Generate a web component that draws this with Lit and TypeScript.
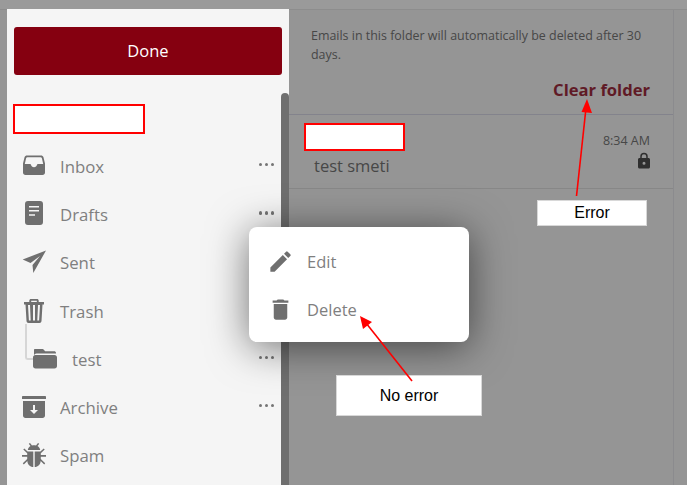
import { LitElement, html, css, svg } from "lit";
import { customElement } from "lit/decorators.js";

const icons: Record<string, any> = {
  inbox: svg`<path fill-rule="evenodd" d="M5 1.500h14c1.200 0 2 .6 2.400 1.600L23 9.500v9c0 1.600-1 2.500-2.500 2.500h-17C2 21 1 20.100 1 18.500v-9l1.600-6.400C3 2.100 3.800 1.500 5 1.500zM5.400 3.300c-.7 0-1.100.3-1.300.9L2.800 10H8c.6 0 .9.300 1 .8.300 1.500 1.400 2.400 3 2.400s2.700-.9 3-2.400c.1-.5.4-.8 1-.8h5.200l-1.300-5.800c-.2-.6-.6-.9-1.300-.9z"/>`,
  drafts: svg`<path fill-rule="evenodd" d="M6 -1h12c2 0 3 1 3 3v18c0 2-1 3-3 3H6c-2 0-3-1-3-3V2c0-2 1-3 3-3zm1 5v1.500h10V4zm0 4v1.500h10V8zm0 4.300v1.500h6v-1.500z"/>`,
  sent: svg`<path d="M24 .5 .7 9.500 8.500 13 18 6l-7.500 9 .8 8z"/>`,
  trash: svg`<path fill-rule="evenodd" d="M9 0h6c1 0 1.600.6 1.700 1.600V3H22v2.500h-1.500L19.500 22c-.1 1.300-.9 2-2 2H6.500c-1.100 0-1.900-.7-2-2L3.500 5.500H2V3h5.300V1.600C7.400.6 8 0 9 0zm.2 1.800V3h5.600V1.800zM6 6l.9 15.600h1.800L8 6zm5 0v15.600h2V6zm5 0-.7 15.600h1.800L18 6z"/>`,
  folder: svg`<path d="M2 3h7c1 0 1.500.4 2 1l1.200 1.300H21c1.200 0 2 .6 2 1.700v.5H3.500C2 7.500 1 8.500 1 10V4c0-.6.400-1 1-1zM3.500 9h18C23 9 24 10 24 11.500V20c0 1.500-1 2.500-2.500 2.500h-19C1 22.500 0 21.500 0 20v-8.500C0 10 1 9 2.500 9z" transform="translate(0 -1)"/>`,
  archive: svg`<path fill-rule="evenodd" d="M1 1h22c.6 0 1 .4 1 1v2H0V2c0-.6.400-1 1-1zM1 6h22v14.500c0 1.500-1 2.500-2.500 2.500h-17C2 23 1 22 1 20.500zm10 4v5H8l4 4 4-4h-3v-5z"/>`,
  bug: svg`<path d="M8.500 3 6.800.8 8 0l2 2.500c1.300-.5 2.700-.5 4 0L16 0l1.200.8L15.500 3c1.500.9 2.500 2.300 2.700 4H5.800c.2-1.700 1.200-3.100 2.700-4zM5.600 8.500h5.700V24C8 24 5.600 21.500 5.300 18L1.800 21.500.8 20.300l4.400-4.400v-2.200H0v-1.600h5.200V10.300L1.300 6.500l1-1.100zm7.100 0h5.700l3.300-3.100 1 1.100-3.900 3.800v1.800H24v1.600h-5.200v2.200l4.400 4.400-1 1.200L18.700 18c-.3 3.500-2.700 6-6 6z"/>`,
  pencil: svg`<path d="M3 17.250V21h3.750L17.810 9.940l-3.750-3.750zM20.710 7.040a1 1 0 0 0 0-1.410l-2.340-2.340a1 1 0 0 0-1.410 0l-1.830 1.830 3.750 3.750z"/>`,
  del: svg`<path d="M6 19c0 1.100.9 2 2 2h8c1.100 0 2-.9 2-2V7H6zM19 4h-3.500l-1-1h-5l-1 1H5v2h14z"/>`,
  lock: svg`<path fill-rule="evenodd" d="M12 1a5 5 0 0 1 5 5v2h1c1.100 0 2 .9 2 2v10c0 1.100-.9 2-2 2H6c-1.100 0-2-.9-2-2V10c0-1.100.9-2 2-2h1V6a5 5 0 0 1 5-5zm0 2a3 3 0 0 0-3 3v2h6V6a3 3 0 0 0-3-3zm0 10a2 2 0 1 0 0 4 2 2 0 0 0 0-4z"/>`,
};

const folders = [
  { name: "Inbox", icon: "inbox", more: true },
  { name: "Drafts", icon: "drafts", more: true },
  { name: "Sent", icon: "sent", more: false },
  { name: "Trash", icon: "trash", more: false },
  { name: "test", icon: "folder", more: true, child: true },
  { name: "Archive", icon: "archive", more: true },
  { name: "Spam", icon: "bug", more: false },
];

@customElement("app-root")
export class AppRoot extends LitElement {
  static styles = css`
    :host {
      display: block;
      position: relative;
      width: 687px;
      height: 485px;
      overflow: hidden;
      background: #959595;
      font-family: "Open Sans", sans-serif;
      color: #7f7f7f;
    }
    .top {
      height: 9px;
      background: #9a9a9a;
      border-bottom: 1px solid #8d8d8d;
    }
    .body {
      display: flex;
      height: 475px;
    }
    .strip {
      width: 7px;
      flex: none;
    }
    .side {
      width: 282px;
      flex: none;
      margin-top: -1px;
      background: #f5f5f5;
      position: relative;
      overflow: hidden;
      box-sizing: border-box;
      padding: 18px 7px 0 7px;
    }
    .scroll {
      position: absolute;
      right: 0;
      top: 84px;
      bottom: -10px;
      width: 8px;
      background: #6f6f6f;
      border-radius: 4px 4px 0 0;
    }
    .done {
      height: 48px;
      line-height: 48px;
      text-align: center;
      background: #850010;
      color: #fff;
      border-radius: 3px;
      font-size: 16.500px;
    }
    .red {
      box-sizing: border-box;
      background: #fff;
      border: 2px solid #ff0000;
    }
    .side .red {
      width: 132px;
      height: 30px;
      margin: 29px 0 9px -1px;
    }
    .row {
      display: flex;
      align-items: center;
      height: 48.200px;
      font-size: 16.800px;
      position: relative;
      padding-right: 8px;
    }
    .row svg.ic {
      width: 24px;
      height: 24px;
      fill: #6f6f6f;
      flex: none;
      margin: -2px 14px 0 8px;
      overflow: visible;
    }
    .row.child svg.ic {
      margin: -2px 15px 0 19px;
    }
    .row .name {
      flex: 1;
      margin-top: -1px;
    }
    .more {
      display: flex;
      gap: 2.500px;
      margin-bottom: 5px;
    }
    .more i {
      width: 3.500px;
      height: 3.500px;
      border-radius: 50%;
      background: #757575;
    }
    .elbow {
      position: absolute;
      left: 11px;
      top: -12px;
      width: 8px;
      height: 36px;
      box-sizing: border-box;
      border-left: 2px solid #d6d6d6;
      border-bottom: 2px solid #d6d6d6;
      border-bottom-left-radius: 3px;
    }
    .main {
      flex: 1;
      min-width: 0;
      border-right: 1px solid #8b8b8e;
      margin-right: 13px;
      color: #474747;
    }
    .notice {
      height: 105px;
      box-sizing: border-box;
      padding: 16px 22px 0 22px;
      border-bottom: 1px solid #83838c;
      font-size: 12.450px;
      line-height: 19px;
    }
    .clear {
      text-align: right;
      color: #601a26;
      font-weight: 700;
      font-size: 16.600px;
      line-height: 22px;
      margin: 15px 1px 0 0;
    }
    .mail {
      height: 74px;
      box-sizing: border-box;
      border-bottom: 1px solid #878787;
      display: flex;
      justify-content: space-between;
      padding: 8px 23px 0 15px;
    }
    .mail .red {
      width: 101px;
      height: 28px;
    }
    .mail .subject {
      font-size: 16.500px;
      margin: 3px 0 0 10px;
    }
    .meta {
      text-align: right;
      font-size: 12.500px;
      padding-top: 9px;
    }
    .meta svg {
      display: block;
      width: 18px;
      height: 18px;
      fill: #2f2f2f;
      margin: 3px -3px 0 auto;
    }
    .popup {
      position: absolute;
      left: 249px;
      top: 227px;
      width: 220px;
      height: 115px;
      box-sizing: border-box;
      padding-top: 10px;
      background: #fff;
      border-radius: 8px;
      box-shadow: 0 5px 40px rgba(0, 0, 0, 0.55);
    }
    .item {
      display: flex;
      align-items: center;
      height: 48.500px;
      font-size: 16.500px;
      padding-left: 18px;
      gap: 13px;
    }
    .item svg {
      width: 27px;
      height: 27px;
      fill: #6f6f6f;
    }
    .note {
      position: absolute;
      box-sizing: border-box;
      background: #fff;
      border: 1px solid #d8d8d8;
      display: flex;
      align-items: center;
      justify-content: center;
      color: #000;
      font-family: "Liberation Sans", sans-serif;
      font-size: 16px;
    }
    .err { left: 537px; top: 200px; width: 110px; height: 26px; }
    .noerr { left: 336px; top: 375px; width: 146px; height: 41px; }
    .arrows {
      position: absolute;
      inset: 0;
      width: 687px;
      height: 485px;
      pointer-events: none;
    }
  `;

  render() {
    return html`
      <div class="top"></div>
      <div class="body">
        <div class="strip"></div>
        <nav class="side">
          <div class="done">Done</div>
          <div class="red"></div>
          ${folders.map(
            (f) => html`
              <div class="row ${f.child ? "child" : ""}">
                ${f.child ? html`<span class="elbow"></span>` : ""}
                <svg class="ic" viewBox="0 0 24 24">${icons[f.icon]}</svg>
                <span class="name">${f.name}</span>
                ${f.more ? html`<span class="more"><i></i><i></i><i></i></span>` : ""}
              </div>
            `
          )}
          <div class="scroll"></div>
        </nav>
        <section class="main">
          <div class="notice">
            Emails in this folder will automatically be deleted after 30 days.
            <div class="clear">Clear folder</div>
          </div>
          <div class="mail">
            <div>
              <div class="red"></div>
              <div class="subject">test smeti</div>
            </div>
            <div class="meta">
              8:34 AM
              <svg viewBox="0 0 24 24">${icons.lock}</svg>
            </div>
          </div>
        </section>
      </div>
      <div class="popup">
        <div class="item"><svg viewBox="0 0 24 24">${icons.pencil}</svg>Edit</div>
        <div class="item"><svg viewBox="0 0 24 24">${icons.del}</svg>Delete</div>
      </div>
      <div class="note err">Error</div>
      <div class="note noerr">No error</div>
      <svg class="arrows" viewBox="0 0 687 485">
        <path d="M576.500 196 586 108" stroke="#f00" stroke-width="1.600" fill="none"/>
        <path d="M587 99 581.500 112 592 113z" fill="#f00"/>
        <path d="M412 381 366 323" stroke="#f00" stroke-width="1.600" fill="none"/>
        <path d="M360 316 363 329 372 322z" fill="#f00"/>
      </svg>
    `;
  }
}
